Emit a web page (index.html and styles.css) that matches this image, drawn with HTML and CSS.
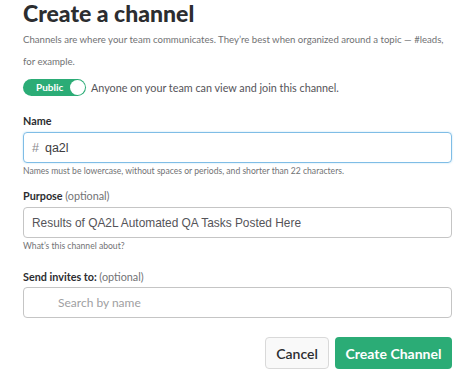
FILE: index.html
```html
<!DOCTYPE html>
<html>
<head>
<meta charset="utf-8">
<link rel="stylesheet" href="styles.css">
</head>
<body>
<div class="modal">
  <h1 class="title">Create a channel</h1>
  <p class="desc">Channels are where your team communicates. They’re best when organized around a topic — #leads, for example.</p>
  <div class="toggle-row">
    <div class="toggle"><span class="toggle-label">Public</span><span class="knob"></span></div>
    <span class="toggle-text">Anyone on your team can view and join this channel.</span>
  </div>

  <div class="label label-name">Name</div>
  <div class="input input-focus"><span class="hash">#</span><span class="val">qa2l</span></div>
  <div class="hint">Names must be lowercase, without spaces or periods, and shorter than 22 characters.</div>

  <div class="label label-purpose">Purpose <span class="opt">(optional)</span></div>
  <div class="input"><span class="val purpose">Results of QA2L Automated QA Tasks Posted Here</span></div>
  <div class="hint">What’s this channel about?</div>

  <div class="label label-invite">Send invites to: <span class="opt">(optional)</span></div>
  <div class="input input-search"><span class="placeholder">Search by name</span></div>

  <div class="actions">
    <button class="btn btn-cancel">Cancel</button>
    <button class="btn btn-create">Create Channel</button>
  </div>
</div>
</body>
</html>
```
FILE: styles.css
```css
html, body { margin: 0; padding: 0; background: #fff; }
body { font-family: Lato, "Noto Sans", sans-serif; color: #2c2d30; }
.modal { padding: 0 22px 0 23px; }
.title {
  margin: 0;
  font-size: 23px;
  line-height: 26px;
  font-weight: 900;
  color: #2c2d30;
  letter-spacing: 0;
}
.desc {
  margin: 3px 0 0;
  font-size: 9.6px;
  line-height: 22px;
  color: #717274;
}
.toggle-row {
  margin-top: 5px;
  display: flex;
  align-items: center;
  height: 18px;
}
.toggle {
  position: relative;
  width: 63px;
  height: 17px;
  background: #2bac76;
  border-radius: 9px;
  display: flex;
  align-items: center;
  box-sizing: border-box;
}
.toggle-label {
  color: #fff;
  font-weight: 700;
  font-size: 10px;
  padding-left: 13px;
}
.knob {
  position: absolute;
  right: 1px;
  top: 1px;
  width: 15px;
  height: 15px;
  border-radius: 50%;
  background: #fff;
}
.toggle-text {
  margin-left: 5px;
  font-size: 10.8px;
  color: #555459;
}
.label {
  font-size: 10.8px;
  line-height: 16px;
  font-weight: 700;
  color: #2c2d30;
}
.label .opt { font-weight: 400; color: #717274; }
.label-name { margin-top: 17px; }
.label-purpose { margin-top: 10px; }
.label-invite { margin-top: 16px; }
.input {
  margin-top: 3px;
  height: 31px;
  box-sizing: border-box;
  border: 1px solid #c5c5c5;
  border-radius: 4px;
  display: flex;
  align-items: center;
  padding-left: 8px;
  font-family: "Liberation Sans", Arial, sans-serif;
  font-size: 12.5px;
  color: #555459;
}
.input-focus { border-color: #7fbde6; box-shadow: 0 0 2px rgba(45,158,224,0.35); }
.hash { color: #8a8a8e; margin-right: 6px; }
.val { color: #3d3c40; }
.purpose { color: #555459; font-size: 11.9px; }
.input-search { margin-top: 2px; padding-left: 34px; }
.placeholder { font-family: Lato, sans-serif; color: #a0a0a2; font-size: 12px; }
.hint {
  margin-top: 1px;
  font-size: 8.6px;
  line-height: 14px;
  color: #717274;
}
.actions {
  margin-top: 19px;
  display: flex;
  justify-content: flex-end;
  gap: 6px;
}
.btn {
  height: 32px;
  border-radius: 4px;
  font-family: Lato, sans-serif;
  font-weight: 700;
  font-size: 14px;
  padding: 0;
  box-sizing: border-box;
}
.btn-cancel {
  width: 64px;
  background: #f9f9f9;
  border: 1px solid #d9d9d9;
  color: #2c2d30;
  font-weight: 600;
}
.btn-create {
  width: 117px;
  background: #2bac76;
  border: none;
  color: #fff;
}
```
